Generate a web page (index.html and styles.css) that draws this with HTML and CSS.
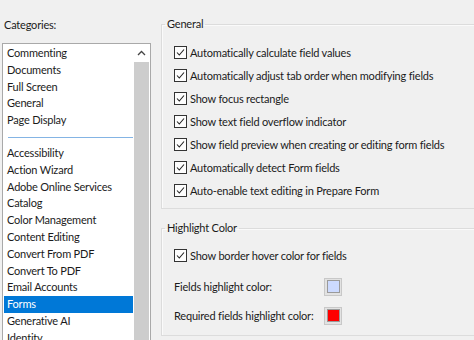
FILE: index.html
```html
<!DOCTYPE html>
<html lang="en">
<head>
    <meta charset="UTF-8">
    <meta name="viewport" content="width=device-width, initial-scale=1.0">
    <title>Preferences - Forms</title>
    <link rel="stylesheet" href="styles.css">
</head>
<body>
<div class="window">
    <div class="side">
        <div class="side-label">Categories:</div>
        <div class="listbox">
            <div class="items">
                <div class="item">Commenting</div>
                <div class="item">Documents</div>
                <div class="item">Full Screen</div>
                <div class="item">General</div>
                <div class="item">Page Display</div>
                <div class="sep"></div>
                <div class="item">Accessibility</div>
                <div class="item">Action Wizard</div>
                <div class="item">Adobe Online Services</div>
                <div class="item">Catalog</div>
                <div class="item">Color Management</div>
                <div class="item">Content Editing</div>
                <div class="item">Convert From PDF</div>
                <div class="item">Convert To PDF</div>
                <div class="item">Email Accounts</div>
                <div class="item selected">Forms</div>
                <div class="item">Generative AI</div>
                <div class="item">Identity</div>
            </div>
            <div class="scrollbar">
                <div class="arrow">
                    <svg width="9" height="6" viewBox="0 0 9 6"><polyline points="1,5 4.5,1.5 8,5" fill="none" stroke="#444" stroke-width="1.3"/></svg>
                </div>
                <div class="thumb"></div>
            </div>
        </div>
    </div>

    <div class="main">
        <fieldset class="group general">
            <legend>General</legend>
            <label class="check"><span class="box"><svg width="11" height="11" viewBox="0 0 11 11"><polyline points="2,5.5 4.3,8 9,2.5" fill="none" stroke="#222" stroke-width="1.1"/></svg></span>Automatically calculate field values</label>
            <label class="check"><span class="box"><svg width="11" height="11" viewBox="0 0 11 11"><polyline points="2,5.5 4.3,8 9,2.5" fill="none" stroke="#222" stroke-width="1.1"/></svg></span>Automatically adjust tab order when modifying fields</label>
            <label class="check"><span class="box"><svg width="11" height="11" viewBox="0 0 11 11"><polyline points="2,5.5 4.3,8 9,2.5" fill="none" stroke="#222" stroke-width="1.1"/></svg></span>Show focus rectangle</label>
            <label class="check"><span class="box"><svg width="11" height="11" viewBox="0 0 11 11"><polyline points="2,5.5 4.3,8 9,2.5" fill="none" stroke="#222" stroke-width="1.1"/></svg></span>Show text field overflow indicator</label>
            <label class="check"><span class="box"><svg width="11" height="11" viewBox="0 0 11 11"><polyline points="2,5.5 4.3,8 9,2.5" fill="none" stroke="#222" stroke-width="1.1"/></svg></span>Show field preview when creating or editing form fields</label>
            <label class="check"><span class="box"><svg width="11" height="11" viewBox="0 0 11 11"><polyline points="2,5.5 4.3,8 9,2.5" fill="none" stroke="#222" stroke-width="1.1"/></svg></span>Automatically detect Form fields</label>
            <label class="check"><span class="box"><svg width="11" height="11" viewBox="0 0 11 11"><polyline points="2,5.5 4.3,8 9,2.5" fill="none" stroke="#222" stroke-width="1.1"/></svg></span>Auto-enable text editing in Prepare Form</label>
        </fieldset>

        <fieldset class="group highlight">
            <legend>Highlight Color</legend>
            <label class="check"><span class="box"><svg width="11" height="11" viewBox="0 0 11 11"><polyline points="2,5.5 4.3,8 9,2.5" fill="none" stroke="#222" stroke-width="1.1"/></svg></span>Show border hover color for fields</label>
            <div class="color-row">
                <span class="color-label">Fields highlight color:</span>
                <span class="swatch"><span class="fill blue"></span></span>
            </div>
            <div class="color-row">
                <span class="color-label">Required fields highlight color:</span>
                <span class="swatch"><span class="fill red"></span></span>
            </div>
        </fieldset>
    </div>
</div>
</body>
</html>
```

FILE: styles.css
```css
*{
    margin: 0;
    padding: 0;
    box-sizing: border-box;
}

body{
    background-color: #f0f0f0;
    font-family: "Lato", "Open Sans", sans-serif;
    font-size: 11px;
    letter-spacing: -0.2px;
    color: #1b1b1b;
    width: 474px;
    height: 340px;
    overflow: hidden;
}

.window{
    display: flex;
    height: 340px;
}

/* left column */
.side{
    width: 161px;
    flex-shrink: 0;
    padding-left: 2px;
}
.side-label{
    height: 43px;
    padding: 17px 0 0 2px;
    line-height: 16px;
}
.listbox{
    display: flex;
    width: 149px;
    height: 320px;
    background-color: #fff;
    border: 1px solid #a9a9a9;
    border-bottom: none;
}
.items{
    flex: 1;
    padding: 1px 1px 0 1px;
}
.item{
    height: 16.8px;
    line-height: 16.8px;
    padding-left: 3px;
    white-space: nowrap;
}
.item.selected{
    background-color: #0078d7;
    color: #fff;
}
.sep{
    height: 1px;
    margin: 8px 0 7px 4px;
    background-color: #84b4e4;
}
.scrollbar{
    width: 15px;
    margin-right: 1px;
    display: flex;
    flex-direction: column;
}
.arrow{
    height: 17px;
    display: flex;
    justify-content: center;
    align-items: center;
}
.thumb{
    flex: 1;
    margin-top: 1px;
    background-color: #cdcdcd;
}

/* right column */
.main{
    flex: 1;
    padding-top: 17px;
}
.group{
    border: 1px solid #dcdcdc;
    border-right: none;
    box-shadow: inset 1px 1px 0 #fafafa;
    display: flex;
    flex-direction: column;
    padding: 0 0 0 12px;
    min-inline-size: 0;
}
.group legend{
    padding: 0 2px;
    margin-left: -9px;
    line-height: 14px;
}
.general{
    height: 192px;
    padding-top: 10px;
}
.highlight{
    margin-top: 12px;
    height: 115px;
    padding-top: 9px;
}
.check{
    display: flex;
    align-items: center;
    height: 23px;
    white-space: nowrap;
}
.box{
    width: 13px;
    height: 13px;
    border: 1px solid #333;
    background-color: #fdfdfd;
    display: flex;
    justify-content: center;
    align-items: center;
    margin-right: 3px;
}
.color-row{
    display: flex;
    align-items: center;
    height: 29px;
}
.color-row:first-of-type{
    margin-top: 5px;
}
.color-label{
    width: 150px;
    white-space: nowrap;
}
.swatch{
    width: 18px;
    height: 18px;
    border: 1px solid #c8c8c8;
    background-color: #e2e2e2;
    display: flex;
    justify-content: center;
    align-items: center;
}
.fill{
    width: 13px;
    height: 13px;
    border: 1px solid #9a9a9a;
}
.fill.blue{
    background-color: #ccdaff;
}
.fill.red{
    background-color: #ff0000;
}
```
